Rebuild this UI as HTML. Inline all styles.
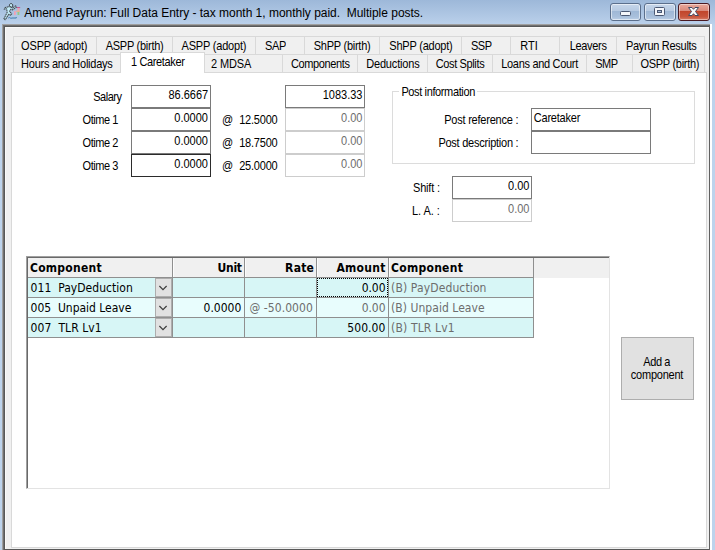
<!DOCTYPE html>
<html><head><meta charset="utf-8"><title>Amend Payrun</title>
<style>
html,body{margin:0;padding:0;}
body{width:715px;height:550px;overflow:hidden;position:relative;background:#bdd3ec;font-family:"Liberation Sans",sans-serif;font-size:11px;color:#000;}
.a{position:absolute;box-sizing:border-box;}
.t{position:absolute;white-space:pre;}
</style></head><body>
<div class="a" style="left:0px;top:0px;width:715px;height:550px;background:linear-gradient(#9db8d9 0px,#bbd1eb 25px,#bdd3ec 27px);"></div>
<div class="a" style="left:2px;top:24px;width:710px;height:526px;background:#a0a0a0;"></div>
<div class="a" style="left:3px;top:25px;width:709px;height:525px;background:#707070;"></div>
<div class="a" style="left:4px;top:26px;width:708px;height:524px;background:#585858;"></div>
<div class="a" style="left:5px;top:27px;width:704px;height:522px;background:#f0f0f0;border-top:1px solid #fafafa;border-left:1px solid #fafafa;"></div>
<div class="a" style="left:709px;top:25px;width:1px;height:525px;background:#606060;"></div>
<div class="a" style="left:710px;top:24px;width:2px;height:526px;background:#fff;"></div>
<div class="a" style="left:610px;top:3px;width:31px;height:18px;border:1px solid #5b6f8c;border-radius:3px;background:linear-gradient(#c6d6ea 0%,#b7cae2 42%,#9fb8d6 46%,#a9c0dc 80%,#bccfe6 100%);box-shadow:inset 0 0 0 1px rgba(255,255,255,.55);"></div>
<div class="a" style="left:644px;top:3px;width:32px;height:18px;border:1px solid #5b6f8c;border-radius:3px;background:linear-gradient(#c6d6ea 0%,#b7cae2 42%,#9fb8d6 46%,#a9c0dc 80%,#bccfe6 100%);box-shadow:inset 0 0 0 1px rgba(255,255,255,.55);"></div>
<div class="a" style="left:678px;top:3px;width:32px;height:18px;border:1px solid #4a1a22;border-radius:3px;background:linear-gradient(#e9a99c 0%,#d98a7b 42%,#c1452b 46%,#c8553c 80%,#d7806a 100%);box-shadow:inset 0 0 0 1px rgba(255,255,255,.45);"></div>
<svg class="a" style="left:610px;top:3px" width="101" height="18" viewBox="0 0 101 18"><rect x="10.5" y="8.5" width="10" height="4" rx="1" fill="#f4f6fa" stroke="#4b5873" stroke-width="1"/><rect x="44.5" y="4.5" width="10" height="8" rx="1" fill="#f4f6fa" stroke="#4b5873" stroke-width="1"/><rect x="47.5" y="7.5" width="4" height="2" fill="#a9c0dc" stroke="#4b5873" stroke-width="1"/><path d="M78.5 4.5 L82 4.5 L83.5 6.3 L85 4.5 L88.5 4.5 L85.5 8.5 L88.5 12.5 L85 12.5 L83.5 10.7 L82 12.5 L78.5 12.5 L81.5 8.5 Z" fill="#fbf9f9" stroke="#434a62" stroke-width="1" stroke-linejoin="round"/></svg>
<svg class="a" style="left:0px;top:0px" width="24" height="22" viewBox="0 0 24 22"><g stroke="#40494e" stroke-width="1.05" stroke-dasharray="1.6 0.5" fill="#c2ebf7" stroke-linejoin="round"><path d="M8.3 6.8 L5.2 7.6 L4.2 9.2 L6.6 8.8 L7.2 12.2 L3.9 18.8 L5.2 19.8 L8.8 14.2 L10.8 15.2 L11.8 13.8 L9.6 11.6 L10.6 9.2 L12.2 10 L16.4 7.2 L15.6 5.9 L12.4 8 L10.6 6.8 Z"/><circle cx="11.1" cy="5.3" r="1.7"/></g><path d="M16.8 7.1 h3.4 v1 h-3.4z" fill="#c4508c"/><path d="M17.5 8.1 h2 v3.6 h-2z" fill="#f2a2ac"/><path d="M17.5 11.7 h1.8 v3.3 h-1.8z" fill="#90c888"/><path d="M16 10.8 h3.8 v1 h-3.8z" fill="#f0b088"/><path d="M14 11.2 h1.8 v3.8 h-1.8z" fill="#f2a0b4"/><path d="M8.3 18 q1.2 -1 2 0 q0.6 0.8 1.6 0 h4.4 v-0.8" fill="none" stroke="#3b79aa" stroke-width="1"/></svg>
<div class="a" style="left:13px;top:36px;width:692px;height:37px;background:#f0f0f0;border-top:1px solid #d9d9d9;border-left:1px solid #d9d9d9;"></div>
<div class="a" style="left:13px;top:54px;width:692px;height:1px;background:#d9d9d9;"></div>
<div class="a" style="left:96px;top:36px;width:1px;height:18px;background:#d9d9d9;"></div>
<div class="a" style="left:172px;top:36px;width:1px;height:18px;background:#d9d9d9;"></div>
<div class="a" style="left:255px;top:36px;width:1px;height:18px;background:#d9d9d9;"></div>
<div class="a" style="left:304px;top:36px;width:1px;height:18px;background:#d9d9d9;"></div>
<div class="a" style="left:379px;top:36px;width:1px;height:18px;background:#d9d9d9;"></div>
<div class="a" style="left:461px;top:36px;width:1px;height:18px;background:#d9d9d9;"></div>
<div class="a" style="left:510px;top:36px;width:1px;height:18px;background:#d9d9d9;"></div>
<div class="a" style="left:559px;top:36px;width:1px;height:18px;background:#d9d9d9;"></div>
<div class="a" style="left:616px;top:36px;width:1px;height:18px;background:#d9d9d9;"></div>
<div class="a" style="left:704px;top:36px;width:1px;height:18px;background:#d9d9d9;"></div>
<div class="a" style="left:120px;top:54px;width:1px;height:18px;background:#d9d9d9;"></div>
<div class="a" style="left:204px;top:54px;width:1px;height:18px;background:#d9d9d9;"></div>
<div class="a" style="left:282px;top:54px;width:1px;height:18px;background:#d9d9d9;"></div>
<div class="a" style="left:357px;top:54px;width:1px;height:18px;background:#d9d9d9;"></div>
<div class="a" style="left:427px;top:54px;width:1px;height:18px;background:#d9d9d9;"></div>
<div class="a" style="left:492px;top:54px;width:1px;height:18px;background:#d9d9d9;"></div>
<div class="a" style="left:586px;top:54px;width:1px;height:18px;background:#d9d9d9;"></div>
<div class="a" style="left:632px;top:54px;width:1px;height:18px;background:#d9d9d9;"></div>
<div class="a" style="left:704px;top:54px;width:1px;height:18px;background:#d9d9d9;"></div>
<div class="a" style="left:11px;top:72px;width:696px;height:476px;background:#fff;border:1px solid #d9d9d9;"></div>
<div class="a" style="left:120px;top:52px;width:85px;height:21px;background:#fff;border:1px solid #d9d9d9;border-bottom:none;"></div>
<div class="a" style="left:131px;top:85px;width:80px;height:23px;background:#fff;border:1px solid #7a7a7a;"></div>
<div class="a" style="left:131px;top:108px;width:80px;height:23px;background:#fff;border:1px solid #7a7a7a;"></div>
<div class="a" style="left:131px;top:131px;width:80px;height:23px;background:#fff;border:1px solid #7a7a7a;"></div>
<div class="a" style="left:131px;top:154px;width:80px;height:23px;background:#fff;border:1px solid #2b2b2b;"></div>
<div class="a" style="left:285px;top:85px;width:80px;height:23px;background:#fff;border:1px solid #7a7a7a;"></div>
<div class="a" style="left:285px;top:108px;width:80px;height:23px;background:#fff;border:1px solid #cdcdcd;"></div>
<div class="a" style="left:285px;top:131px;width:80px;height:23px;background:#fff;border:1px solid #cdcdcd;"></div>
<div class="a" style="left:285px;top:154px;width:80px;height:23px;background:#fff;border:1px solid #cdcdcd;"></div>
<div class="a" style="left:392px;top:91px;width:303px;height:73px;border:1px solid #dcdcdc;"></div>
<div class="a" style="left:399px;top:90px;width:78px;height:3px;background:#fff;"></div>
<div class="a" style="left:531px;top:108px;width:120px;height:23px;background:#fff;border:1px solid #7a7a7a;"></div>
<div class="a" style="left:531px;top:131px;width:120px;height:23px;background:#fff;border:1px solid #7a7a7a;"></div>
<div class="a" style="left:452px;top:176px;width:80px;height:23px;background:#fff;border:1px solid #7a7a7a;"></div>
<div class="a" style="left:452px;top:199px;width:80px;height:23px;background:#fff;border:1px solid #cdcdcd;"></div>
<div class="a" style="left:621px;top:337px;width:73px;height:63px;background:#e1e1e1;border:1px solid #adadad;"></div>
<div class="a" style="left:26px;top:256px;width:584px;height:233px;background:#fff;border-top:1px solid #a0a0a0;border-left:1px solid #a0a0a0;border-right:1px solid #e3e3e3;border-bottom:1px solid #e3e3e3;"></div>
<div class="a" style="left:27px;top:257px;width:582px;height:231px;border-top:1px solid #696969;border-left:1px solid #696969;"></div>
<div class="a" style="left:28px;top:258px;width:581px;height:19px;background:#f0f0f0;"></div>
<div class="a" style="left:534px;top:258px;width:75px;height:20px;background:#f0f0f0;"></div>
<div class="a" style="left:28px;top:278px;width:505px;height:19px;background:#d7f6f6;"></div>
<div class="a" style="left:28px;top:298px;width:505px;height:19px;background:#e8fdfd;"></div>
<div class="a" style="left:28px;top:318px;width:505px;height:19px;background:#d7f6f6;"></div>
<div class="a" style="left:28px;top:277px;width:506px;height:1px;background:#8f8f8f;"></div>
<div class="a" style="left:28px;top:297px;width:506px;height:1px;background:#8f8f8f;"></div>
<div class="a" style="left:28px;top:317px;width:506px;height:1px;background:#8f8f8f;"></div>
<div class="a" style="left:28px;top:337px;width:506px;height:1px;background:#8f8f8f;"></div>
<div class="a" style="left:172px;top:258px;width:1px;height:80px;background:#8f8f8f;"></div>
<div class="a" style="left:244px;top:258px;width:1px;height:80px;background:#8f8f8f;"></div>
<div class="a" style="left:316px;top:258px;width:1px;height:80px;background:#8f8f8f;"></div>
<div class="a" style="left:388px;top:258px;width:1px;height:80px;background:#8f8f8f;"></div>
<div class="a" style="left:533px;top:258px;width:1px;height:80px;background:#8f8f8f;"></div>
<div class="a" style="left:173px;top:258px;width:1px;height:19px;background:#fcfcfc;"></div>
<div class="a" style="left:245px;top:258px;width:1px;height:19px;background:#fcfcfc;"></div>
<div class="a" style="left:317px;top:258px;width:1px;height:19px;background:#fcfcfc;"></div>
<div class="a" style="left:389px;top:258px;width:1px;height:19px;background:#fcfcfc;"></div>
<div class="a" style="left:155px;top:278px;width:17px;height:19px;background:#e1e1e1;border:1px solid #adadad;"></div>
<svg class="a" style="left:158px;top:284px" width="10" height="8" viewBox="0 0 10 8"><path d="M1.4 2 L5 5.6 L8.6 2" fill="none" stroke="#3c3c3c" stroke-width="1.15"/></svg>
<div class="a" style="left:155px;top:298px;width:17px;height:19px;background:#e1e1e1;border:1px solid #adadad;"></div>
<svg class="a" style="left:158px;top:304px" width="10" height="8" viewBox="0 0 10 8"><path d="M1.4 2 L5 5.6 L8.6 2" fill="none" stroke="#3c3c3c" stroke-width="1.15"/></svg>
<div class="a" style="left:155px;top:318px;width:17px;height:19px;background:#e1e1e1;border:1px solid #adadad;"></div>
<svg class="a" style="left:158px;top:324px" width="10" height="8" viewBox="0 0 10 8"><path d="M1.4 2 L5 5.6 L8.6 2" fill="none" stroke="#3c3c3c" stroke-width="1.15"/></svg>
<div class="a" style="left:317px;top:278px;width:71px;height:19px;border:1px dotted #000;"></div>
<div class="t" style="left:24.20px;top:5.00px;font-size:12px;line-height:16px;letter-spacing:-0.016px;">Amend Payrun: Full Data Entry - tax month 1, monthly paid. &nbsp;Multiple posts.</div>
<div class="t" style="left:21.10px;top:39.00px;font-size:11px;line-height:14px;letter-spacing:-0.173px;transform-origin:0 11px;transform:scaleY(1.1);">OSPP (adopt)</div>
<div class="t" style="left:105.70px;top:39.00px;font-size:11px;line-height:14px;letter-spacing:-0.261px;transform-origin:0 11px;transform:scaleY(1.1);">ASPP (birth)</div>
<div class="t" style="left:181.60px;top:39.00px;font-size:11px;line-height:14px;letter-spacing:-0.197px;transform-origin:0 11px;transform:scaleY(1.1);">ASPP (adopt)</div>
<div class="t" style="left:265.00px;top:39.00px;font-size:11px;line-height:14px;letter-spacing:-0.372px;transform-origin:0 11px;transform:scaleY(1.1);">SAP</div>
<div class="t" style="left:313.70px;top:39.00px;font-size:11px;line-height:14px;letter-spacing:-0.243px;transform-origin:0 11px;transform:scaleY(1.1);">ShPP (birth)</div>
<div class="t" style="left:389.30px;top:39.00px;font-size:11px;line-height:14px;letter-spacing:-0.220px;transform-origin:0 11px;transform:scaleY(1.1);">ShPP (adopt)</div>
<div class="t" style="left:470.90px;top:39.00px;font-size:11px;line-height:14px;letter-spacing:-0.405px;transform-origin:0 11px;transform:scaleY(1.1);">SSP</div>
<div class="t" style="left:520.30px;top:39.00px;font-size:11px;line-height:14px;letter-spacing:0.056px;transform-origin:0 11px;transform:scaleY(1.1);">RTI</div>
<div class="t" style="left:569.70px;top:39.00px;font-size:11px;line-height:14px;letter-spacing:-0.320px;transform-origin:0 11px;transform:scaleY(1.1);">Leavers</div>
<div class="t" style="left:626.00px;top:39.00px;font-size:11px;line-height:14px;letter-spacing:-0.292px;transform-origin:0 11px;transform:scaleY(1.1);">Payrun Results</div>
<div class="t" style="left:21.10px;top:57.00px;font-size:11px;line-height:14px;letter-spacing:-0.256px;transform-origin:0 11px;transform:scaleY(1.1);">Hours and Holidays</div>
<div class="t" style="left:131.00px;top:55.00px;font-size:11px;line-height:14px;letter-spacing:-0.362px;transform-origin:0 11px;transform:scaleY(1.1);">1 Caretaker</div>
<div class="t" style="left:211.00px;top:57.00px;font-size:11px;line-height:14px;letter-spacing:-0.111px;transform-origin:0 11px;transform:scaleY(1.1);">2 MDSA</div>
<div class="t" style="left:290.90px;top:57.00px;font-size:11px;line-height:14px;letter-spacing:-0.357px;transform-origin:0 11px;transform:scaleY(1.1);">Components</div>
<div class="t" style="left:366.20px;top:57.00px;font-size:11px;line-height:14px;letter-spacing:-0.165px;transform-origin:0 11px;transform:scaleY(1.1);">Deductions</div>
<div class="t" style="left:435.70px;top:57.00px;font-size:11px;line-height:14px;letter-spacing:-0.362px;transform-origin:0 11px;transform:scaleY(1.1);">Cost Splits</div>
<div class="t" style="left:501.20px;top:57.00px;font-size:11px;line-height:14px;letter-spacing:-0.303px;transform-origin:0 11px;transform:scaleY(1.1);">Loans and Court</div>
<div class="t" style="left:595.20px;top:57.00px;font-size:11px;line-height:14px;letter-spacing:-0.448px;transform-origin:0 11px;transform:scaleY(1.1);">SMP</div>
<div class="t" style="left:640.50px;top:57.00px;font-size:11px;line-height:14px;letter-spacing:-0.288px;transform-origin:0 11px;transform:scaleY(1.1);">OSPP (birth)</div>
<div class="t" style="left:93.20px;top:90.00px;font-size:11px;line-height:14px;letter-spacing:-0.465px;transform-origin:0 11px;transform:scaleY(1.1);">Salary</div>
<div class="t" style="left:82.60px;top:113.00px;font-size:11px;line-height:14px;letter-spacing:-0.474px;transform-origin:0 11px;transform:scaleY(1.1);">Otime 1</div>
<div class="t" style="left:82.60px;top:136.00px;font-size:11px;line-height:14px;letter-spacing:-0.474px;transform-origin:0 11px;transform:scaleY(1.1);">Otime 2</div>
<div class="t" style="left:82.60px;top:159.00px;font-size:11px;line-height:14px;letter-spacing:-0.474px;transform-origin:0 11px;transform:scaleY(1.1);">Otime 3</div>
<div class="t" style="left:222.00px;top:113.00px;font-size:11px;line-height:14px;transform-origin:0 11px;transform:scaleY(1.1);">@</div>
<div class="t" style="left:239.20px;top:113.00px;font-size:11px;line-height:14px;letter-spacing:-0.209px;transform-origin:0 11px;transform:scaleY(1.1);">12.5000</div>
<div class="t" style="left:222.00px;top:136.00px;font-size:11px;line-height:14px;transform-origin:0 11px;transform:scaleY(1.1);">@</div>
<div class="t" style="left:239.20px;top:136.00px;font-size:11px;line-height:14px;letter-spacing:-0.209px;transform-origin:0 11px;transform:scaleY(1.1);">18.7500</div>
<div class="t" style="left:222.00px;top:159.00px;font-size:11px;line-height:14px;transform-origin:0 11px;transform:scaleY(1.1);">@</div>
<div class="t" style="left:239.20px;top:159.00px;font-size:11px;line-height:14px;letter-spacing:-0.209px;transform-origin:0 11px;transform:scaleY(1.1);">25.0000</div>
<div class="t" style="left:401.40px;top:85.00px;font-size:11px;line-height:14px;letter-spacing:-0.374px;transform-origin:0 11px;transform:scaleY(1.1);">Post information</div>
<div class="t" style="left:444.20px;top:113.00px;font-size:11px;line-height:14px;letter-spacing:-0.216px;transform-origin:0 11px;transform:scaleY(1.1);">Post reference :</div>
<div class="t" style="left:438.40px;top:136.00px;font-size:11px;line-height:14px;letter-spacing:-0.243px;transform-origin:0 11px;transform:scaleY(1.1);">Post description :</div>
<div class="t" style="left:413.00px;top:181.00px;font-size:11px;line-height:14px;letter-spacing:-0.189px;transform-origin:0 11px;transform:scaleY(1.1);">Shift :</div>
<div class="t" style="left:412.00px;top:204.00px;font-size:11px;line-height:14px;letter-spacing:-0.049px;transform-origin:0 11px;transform:scaleY(1.1);">L. A. :</div>
<div class="t" style="left:168.43px;top:88.00px;font-size:11px;line-height:14px;transform-origin:0 11px;transform:scaleY(1.1);">86.6667</div>
<div class="t" style="left:174.34px;top:111.00px;font-size:11px;line-height:14px;transform-origin:0 11px;transform:scaleY(1.1);">0.0000</div>
<div class="t" style="left:174.34px;top:134.00px;font-size:11px;line-height:14px;transform-origin:0 11px;transform:scaleY(1.1);">0.0000</div>
<div class="t" style="left:174.34px;top:157.00px;font-size:11px;line-height:14px;transform-origin:0 11px;transform:scaleY(1.1);">0.0000</div>
<div class="t" style="left:322.73px;top:88.00px;font-size:11px;line-height:14px;transform-origin:0 11px;transform:scaleY(1.1);">1083.33</div>
<div class="t" style="left:341.08px;top:111.00px;font-size:11px;line-height:14px;transform-origin:0 11px;transform:scaleY(1.1);color:#6d6d6d;">0.00</div>
<div class="t" style="left:341.08px;top:134.00px;font-size:11px;line-height:14px;transform-origin:0 11px;transform:scaleY(1.1);color:#6d6d6d;">0.00</div>
<div class="t" style="left:341.08px;top:157.00px;font-size:11px;line-height:14px;transform-origin:0 11px;transform:scaleY(1.1);color:#6d6d6d;">0.00</div>
<div class="t" style="left:533.80px;top:111.00px;font-size:11px;line-height:14px;letter-spacing:-0.222px;transform-origin:0 11px;transform:scaleY(1.1);">Caretaker</div>
<div class="t" style="left:508.08px;top:179.00px;font-size:11px;line-height:14px;transform-origin:0 11px;transform:scaleY(1.1);">0.00</div>
<div class="t" style="left:508.08px;top:202.00px;font-size:11px;line-height:14px;transform-origin:0 11px;transform:scaleY(1.1);color:#6d6d6d;">0.00</div>
<div class="t" style="left:643.20px;top:355.00px;font-size:11px;line-height:14px;letter-spacing:-0.370px;transform-origin:0 11px;transform:scaleY(1.1);">Add a</div>
<div class="t" style="left:630.80px;top:368.00px;font-size:11px;line-height:14px;letter-spacing:-0.226px;transform-origin:0 11px;transform:scaleY(1.1);">component</div>
<div class="t" style="left:30.00px;top:260.00px;font-size:12px;line-height:16px;letter-spacing:0.243px;font-family:'DejaVu Sans Condensed','DejaVu Sans',sans-serif;font-weight:bold;">Component</div>
<div class="t" style="left:217.40px;top:260.00px;font-size:12px;line-height:16px;letter-spacing:-0.228px;font-family:'DejaVu Sans Condensed','DejaVu Sans',sans-serif;font-weight:bold;">Unit</div>
<div class="t" style="left:285.10px;top:260.00px;font-size:12px;line-height:16px;letter-spacing:0.227px;font-family:'DejaVu Sans Condensed','DejaVu Sans',sans-serif;font-weight:bold;">Rate</div>
<div class="t" style="left:336.50px;top:260.00px;font-size:12px;line-height:16px;letter-spacing:0.256px;font-family:'DejaVu Sans Condensed','DejaVu Sans',sans-serif;font-weight:bold;">Amount</div>
<div class="t" style="left:391.10px;top:260.00px;font-size:12px;line-height:16px;letter-spacing:0.266px;font-family:'DejaVu Sans Condensed','DejaVu Sans',sans-serif;font-weight:bold;">Component</div>
<div class="t" style="left:30.60px;top:280.00px;font-size:12px;line-height:16px;letter-spacing:0.029px;font-family:'DejaVu Sans Condensed','DejaVu Sans',sans-serif;">011 &nbsp;PayDeduction</div>
<div class="t" style="left:361.70px;top:280.00px;font-size:12px;line-height:16px;letter-spacing:-0.058px;font-family:'DejaVu Sans Condensed','DejaVu Sans',sans-serif;">0.00</div>
<div class="t" style="left:391.10px;top:280.00px;font-size:12px;line-height:16px;letter-spacing:0.124px;font-family:'DejaVu Sans Condensed','DejaVu Sans',sans-serif;color:#6d6d6d;">(B) PayDeduction</div>
<div class="t" style="left:30.60px;top:300.00px;font-size:12px;line-height:16px;letter-spacing:-0.021px;font-family:'DejaVu Sans Condensed','DejaVu Sans',sans-serif;">005 &nbsp;Unpaid Leave</div>
<div class="t" style="left:203.60px;top:300.00px;font-size:12px;line-height:16px;letter-spacing:-0.011px;font-family:'DejaVu Sans Condensed','DejaVu Sans',sans-serif;">0.0000</div>
<div class="t" style="left:249.40px;top:300.00px;font-size:12px;line-height:16px;letter-spacing:0.083px;font-family:'DejaVu Sans Condensed','DejaVu Sans',sans-serif;color:#6d6d6d;">@ -50.0000</div>
<div class="t" style="left:361.70px;top:300.00px;font-size:12px;line-height:16px;letter-spacing:-0.058px;font-family:'DejaVu Sans Condensed','DejaVu Sans',sans-serif;color:#6d6d6d;">0.00</div>
<div class="t" style="left:391.10px;top:300.00px;font-size:12px;line-height:16px;letter-spacing:0.040px;font-family:'DejaVu Sans Condensed','DejaVu Sans',sans-serif;color:#6d6d6d;">(B) Unpaid Leave</div>
<div class="t" style="left:30.60px;top:320.00px;font-size:12px;line-height:16px;letter-spacing:0.078px;font-family:'DejaVu Sans Condensed','DejaVu Sans',sans-serif;">007 &nbsp;TLR Lv1</div>
<div class="t" style="left:347.30px;top:320.00px;font-size:12px;line-height:16px;letter-spacing:0.072px;font-family:'DejaVu Sans Condensed','DejaVu Sans',sans-serif;">500.00</div>
<div class="t" style="left:391.10px;top:320.00px;font-size:12px;line-height:16px;letter-spacing:0.140px;font-family:'DejaVu Sans Condensed','DejaVu Sans',sans-serif;color:#6d6d6d;">(B) TLR Lv1</div>
</body></html>
